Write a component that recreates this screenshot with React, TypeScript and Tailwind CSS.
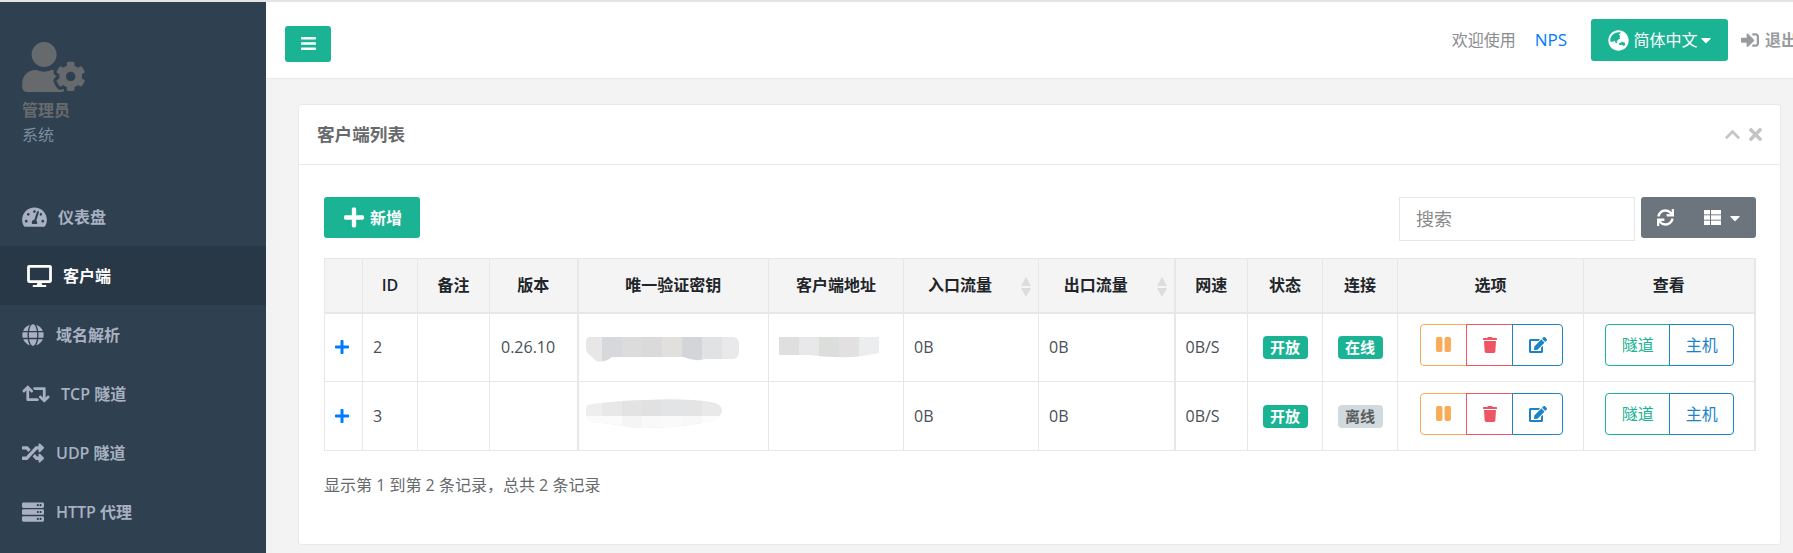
import React from "react";
import {
  FaUserCog, FaTachometerAlt, FaDesktop, FaGlobe, FaRetweet, FaRandom, FaServer,
  FaBars, FaGlobeAsia, FaSignInAlt, FaChevronUp, FaTimes, FaPlus, FaSync,
  FaPause, FaTrash, FaEdit, FaCaretDown,
} from "react-icons/fa";

function Blob({ id, path, cells, width }: { id: string; path: string; cells: [number, number, number, string][]; width: number }) {
  return (
    <svg width={width} height={40} viewBox={`0 0 ${width} 40`} className="block">
      <clipPath id={id}><path d={path} /></clipPath>
      <g clipPath={`url(#${id})`}>
        {cells.map(([x, y, w, c], i) => (
          <rect key={i} x={x} y={y} width={w} height={y === 0 ? 40 : 40 - y} fill={c} />
        ))}
      </g>
    </svg>
  );
}

const key1 = (
  <Blob
    id="k1"
    width={156}
    path="M0 14 Q0 10 4 10 H146 Q153 10 153 17 V25 Q153 32 146 32 H120 Q108 35 98 30 H26 Q18 36 10 34 Q6 30 4 28 Q0 26 0 20 Z"
    cells={[
      [0, 0, 16, "#e8e6e6"], [16, 0, 20, "#d7d8db"], [36, 0, 20, "#dcdcdc"], [56, 0, 20, "#dadada"],
      [76, 0, 20, "#e2e0dd"], [96, 0, 20, "#d4d5d9"], [116, 0, 20, "#e1e2e4"], [136, 0, 20, "#e9e9ec"],
    ]}
  />
);
const addr1 = (
  <Blob
    id="a1"
    width={110}
    path="M10 10 H110 V26 L94 29 Q70 32 40 28 H10 Z"
    cells={[
      [10, 0, 20, "#dfdfdf"], [30, 0, 20, "#e8e8ea"], [50, 0, 20, "#dcdedc"], [70, 0, 20, "#e2e0e0"], [90, 0, 20, "#ecedef"],
    ]}
  />
);
const key2 = (
  <Blob
    id="k2"
    width={140}
    path="M0 12 Q0 9 6 8 Q40 4 60 4 Q100 2 125 6 Q136 8 136 14 Q136 20 128 24 Q100 32 50 32 Q30 28 4 26 Q0 22 0 18 Z"
    cells={[
      [0, 0, 16, "#eeeeee"], [16, 0, 20, "#e8e8e9"], [36, 0, 20, "#e3e3e4"], [56, 0, 20, "#e1e1e1"],
      [76, 0, 20, "#e3e4e6"], [96, 0, 20, "#e4e4e5"], [116, 0, 20, "#e9e9ea"],
      [0, 20, 16, "#fbfbfb"], [16, 20, 20, "#fbfbfb"], [36, 20, 20, "#f5f5f5"], [56, 20, 20, "#f9f9f9"],
      [76, 20, 20, "#fafafa"], [96, 20, 20, "#f8f8f8"], [116, 20, 20, "#fcfcfc"],
    ]}
  />
);

const navItems = [
  { label: "仪表盘", icon: <FaTachometerAlt className="w-[25px] h-[22px]" />, gap: "ml-[11px]" },
  { label: "客户端", icon: <FaDesktop className="w-[25px] h-[22px]" />, gap: "ml-[11px]", active: true },
  { label: "域名解析", icon: <FaGlobe className="w-[22px] h-[22px]" />, gap: "ml-[12px]" },
  { label: "TCP 隧道", icon: <FaRetweet className="w-[28px] h-[22px]" />, gap: "ml-[11px]" },
  { label: "UDP 隧道", icon: <FaRandom className="w-[22px] h-[22px]" />, gap: "ml-[12px]" },
  { label: "HTTP 代理", icon: <FaServer className="w-[22px] h-[22px]" />, gap: "ml-[12px]" },
];

const th = "border border-[#e7e7e7] border-b-2 bg-[#f4f4f4] h-[54px] p-0 text-center text-[16px] font-semibold text-[#212529] relative";
const td = "border border-[#e7e7e7] h-[69px] px-[10px] py-0 text-[16px] text-[#495057]";

function Sort() {
  return (
    <svg width="12" height="20" viewBox="0 0 12 20" className="absolute right-[6px] top-[18px]">
      <path d="M6 0 L11 9 H1 Z M1 11 H11 L6 20 Z" fill="#dcdcdc" />
    </svg>
  );
}

function ThListIcon() {
  return (
    <svg width="17" height="15" viewBox="0 0 17 15" className="ml-[30px]" fill="white">
      <rect x="0" y="0" width="6" height="4.4" />
      <rect x="7" y="0" width="10" height="4.4" />
      <rect x="0" y="5.3" width="6" height="4.4" />
      <rect x="7" y="5.3" width="10" height="4.4" />
      <rect x="0" y="10.6" width="6" height="4.4" />
      <rect x="7" y="10.6" width="10" height="4.4" />
    </svg>
  );
}

function Row({ id, version, keyBlob, addr, online }: { id: string; version: string; keyBlob: React.ReactNode; addr: React.ReactNode; online: boolean }) {
  return (
    <tr>
      <td className={td}><FaPlus className="w-[14px] h-[16px] text-[#007bff]" /></td>
      <td className={td}>{id}</td>
      <td className={td}></td>
      <td className={`${td} !pl-[11px]`}>{version}</td>
      <td className={`${td} !px-[7px] border-l-2`}>{keyBlob}</td>
      <td className={`${td} !px-0`}>{addr}</td>
      <td className={td}>0B</td>
      <td className={td}>0B</td>
      <td className={`${td} border-l-2`}>0B/S</td>
      <td className={`${td} !px-0 text-center`}>
        <span className="inline-flex items-center justify-center w-[45px] h-[23px] rounded-[4px] bg-[#1ab394] text-white text-[15px] font-bold">开放</span>
      </td>
      <td className={`${td} !px-0 text-center`}>
        {online ? (
          <span className="inline-flex items-center justify-center w-[45px] h-[23px] rounded-[4px] bg-[#1ab394] text-white text-[15px] font-bold">在线</span>
        ) : (
          <span className="inline-flex items-center justify-center w-[45px] h-[23px] rounded-[4px] bg-[#d1dade] text-[#5e5e5e] text-[15px] font-bold">离线</span>
        )}
      </td>
      <td className={`${td} !px-0 text-center`}>
        <div className="inline-flex align-middle mb-[5px] ml-[2px]">
          <span className="flex items-center justify-center w-[47px] h-[42px] border border-[#f8ac59] rounded-l-[4px] text-[#f8ac59]"><FaPause className="w-[15px] h-[17px]" /></span>
          <span className="flex items-center justify-center w-[47px] h-[42px] -ml-px border border-[#ed5565] text-[#ed5565]"><FaTrash className="w-[14px] h-[16px]" /></span>
          <span className="flex items-center justify-center w-[51px] h-[42px] -ml-px border border-[#1c84c6] rounded-r-[4px] text-[#1c84c6]"><FaEdit className="w-[18px] h-[16px]" /></span>
        </div>
      </td>
      <td className={`${td} !px-0 text-center border-r-2`}>
        <div className="inline-flex align-middle text-[16px] mb-[5px] ml-[2px]">
          <span className="flex items-center justify-center w-[65px] h-[42px] border border-[#1ab394] rounded-l-[4px] text-[#1ab394]">隧道</span>
          <span className="flex items-center justify-center w-[65px] h-[42px] -ml-px border border-[#1c84c6] rounded-r-[4px] text-[#1c84c6]">主机</span>
        </div>
      </td>
    </tr>
  );
}

export default function App() {
  return (
    <div className="w-[1793px] h-[553px] overflow-hidden flex flex-col bg-[#f3f3f4] font-['Open_Sans','Noto_Sans_CJK_SC',sans-serif]">
      <div className="h-[2px] shrink-0 bg-[#e4e4e4]" />
      <div className="flex flex-1 min-h-0">
        <aside className="w-[266px] shrink-0 bg-[#2f4050] text-[16px]">
          <div className="h-[185px] pl-[22px] pt-[40px]">
            <FaUserCog className="w-[63px] h-[50px] text-[#676a6c]" />
            <div className="mt-[6px] leading-[24px] font-semibold text-[#676a6c]">管理员</div>
            <div className="mt-[1px] leading-[24px] text-[#7b8da0]">系统</div>
          </div>
          {navItems.map((n) => (
            <div
              key={n.label}
              className={`h-[59px] flex items-center font-semibold ${n.active ? "bg-[#293846] text-white pl-[27px]" : "text-[#a7b1c2] pl-[22px]"}`}
            >
              {n.icon}
              <span className={n.gap}>{n.label}</span>
            </div>
          ))}
        </aside>
        <main className="flex-1 min-w-0">
          <header className="h-[77px] bg-white border-b border-[#e7eaec] flex items-center pl-[19px] whitespace-nowrap">
            <button className="w-[46px] h-[36px] mt-[7px] rounded-[3px] bg-[#1ab394] text-white flex items-center justify-center">
              <FaBars className="w-[15px] h-[17px]" />
            </button>
            <div className="ml-auto flex items-center text-[16px] -mr-[4px]">
              <span className="text-[#8a8c8e]">欢迎使用</span>
              <span className="ml-[19px] text-[17px] text-[#007bff]">NPS</span>
              <button className="ml-[24px] w-[137px] h-[42px] rounded-[3px] bg-[#1ab394] text-white flex items-center justify-center">
                <FaGlobeAsia className="w-[21px] h-[21px]" />
                <span className="ml-[4px]">简体中文</span>
                <FaCaretDown className="ml-[3px] w-[10px] h-[16px]" />
              </button>
              <FaSignInAlt className="ml-[13px] w-[18px] h-[18px] text-[#999c9e]" />
              <span className="ml-[6px] font-bold text-[#999c9e] w-[32px]">退出</span>
            </div>
          </header>
          <section className="mt-[25px] ml-[32px] w-[1483px] h-[441px] bg-white border border-[#e7eaec] rounded-[3px]">
            <div className="h-[60px] border-b border-[#e7eaec] flex items-center pl-[18px] pr-[18px]">
              <h5 className="text-[17.6px] font-semibold text-[#676a6c]">客户端列表</h5>
              <FaChevronUp className="ml-auto w-[15px] h-[17px] text-[#c4c4c4]" />
              <FaTimes className="ml-[9px] w-[13px] h-[19px] text-[#c4c4c4]" />
            </div>
            <div className="pl-[25px] pr-[24px] pt-[32px]">
              <div className="flex justify-between items-start h-[61px]">
                <button className="w-[96px] h-[41px] pl-[2px] rounded-[3px] bg-[#1ab394] text-white flex items-center justify-center font-semibold">
                  <FaPlus className="w-[20px] h-[23px]" />
                  <span className="ml-[6px] text-[16px]">新增</span>
                </button>
                <div className="flex items-start">
                  <div className="w-[236px] h-[44px] border border-[#e5e6e7] flex items-center pl-[16px] text-[18px] text-[#8a8a8a]">搜索</div>
                  <div className="ml-[6px] w-[115px] h-[41px] rounded-[3px] bg-[#6c757d] text-white flex items-center">
                    <FaSync className="ml-[16px] w-[17px] h-[17px]" />
                    <ThListIcon />
                    <FaCaretDown className="ml-[9px] w-[10px] h-[16px]" />
                  </div>
                </div>
              </div>
              <table className="table-fixed border-collapse w-[1430px]">
                <colgroup>
                  <col className="w-[38px]" /><col className="w-[55px]" /><col className="w-[72px]" /><col className="w-[88px]" />
                  <col className="w-[191px]" /><col className="w-[135px]" /><col className="w-[135px]" /><col className="w-[136px]" />
                  <col className="w-[73px]" /><col className="w-[75px]" /><col className="w-[75px]" /><col className="w-[186px]" /><col className="w-[171px]" />
                </colgroup>
                <thead>
                  <tr>
                    <th className={th}></th>
                    <th className={th}>ID</th>
                    <th className={th}>备注</th>
                    <th className={th}>版本</th>
                    <th className={`${th} border-l-2`}>唯一验证密钥</th>
                    <th className={th}>客户端地址</th>
                    <th className={`${th} !pr-[22px]`}>入口流量<Sort /></th>
                    <th className={`${th} !pr-[21px]`}>出口流量<Sort /></th>
                    <th className={`${th} border-l-2`}>网速</th>
                    <th className={th}>状态</th>
                    <th className={th}>连接</th>
                    <th className={th}>选项</th>
                    <th className={`${th} border-r-2`}>查看</th>
                  </tr>
                </thead>
                <tbody>
                  <Row id="2" version="0.26.10" keyBlob={key1} addr={addr1} online />
                  <Row id="3" version="" keyBlob={key2} addr={null} online={false} />
                </tbody>
              </table>
              <div className="mt-[22px] text-[16px] leading-[24px] text-[#676a6c]">显示第 1 到第 2 条记录，总共 2 条记录</div>
            </div>
          </section>
        </main>
      </div>
    </div>
  );
}
